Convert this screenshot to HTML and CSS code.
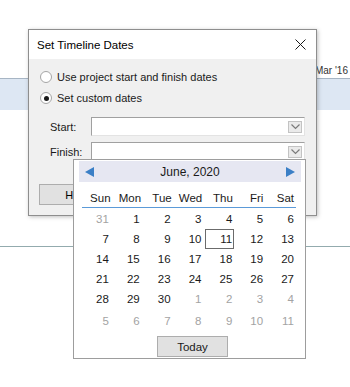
FILE: index.html
```html
<!DOCTYPE html>
<html>
<head>
<meta charset="utf-8">
<link rel="stylesheet" href="styles.css">
</head>
<body>
<div class="timeline">
  <div class="scale-label">Mar '16</div>
  <div class="band"></div>
  <div class="spacer"></div>
  <div class="baseline"></div>
</div>

<div class="dialog">
  <div class="titlebar">
    <span class="title">Set Timeline Dates</span>
    <svg class="close" width="11" height="11" viewBox="0 0 11 11"><path d="M0.5 0.5 L10.5 10.5 M10.5 0.5 L0.5 10.5" stroke="#1a1a1a" stroke-width="1" fill="none"/></svg>
  </div>
  <div class="dlg-body">
    <label class="radio-row"><span class="radio"></span><span>Use project start and finish dates</span></label>
    <label class="radio-row"><span class="radio checked"></span><span>Set custom dates</span></label>
    <div class="field first">
      <span class="field-label">Start:</span>
      <div class="combo"><span class="drop"><svg width="9" height="6" viewBox="0 0 9 6"><path d="M0.5 0.5 L4.5 4.5 L8.5 0.5" stroke="#7a7a7a" stroke-width="1.2" fill="none"/></svg></span></div>
    </div>
    <div class="field">
      <span class="field-label">Finish:</span>
      <div class="combo"><span class="drop"><svg width="9" height="6" viewBox="0 0 9 6"><path d="M0.5 0.5 L4.5 4.5 L8.5 0.5" stroke="#7a7a7a" stroke-width="1.2" fill="none"/></svg></span></div>
    </div>
    <div class="buttons">
      <button class="btn">Help</button>
    </div>
  </div>
</div>

<div class="calendar">
  <div class="cal-head">
    <span class="arrow left"></span>
    <span class="month">June, 2020</span>
    <span class="arrow right"></span>
  </div>
  <div class="weekdays">
    <span>Sun</span><span>Mon</span><span>Tue</span><span>Wed</span><span>Thu</span><span>Fri</span><span>Sat</span>
  </div>
  <div class="days">
    <span class="other">31</span><span>1</span><span>2</span><span>3</span><span>4</span><span>5</span><span>6</span>
    <span>7</span><span>8</span><span>9</span><span>10</span><span class="today">11</span><span>12</span><span>13</span>
    <span>14</span><span>15</span><span>16</span><span>17</span><span>18</span><span>19</span><span>20</span>
    <span>21</span><span>22</span><span>23</span><span>24</span><span>25</span><span>26</span><span>27</span>
    <span>28</span><span>29</span><span>30</span><span class="other">1</span><span class="other">2</span><span class="other">3</span><span class="other">4</span>
    <span class="other">5</span><span class="other">6</span><span class="other">7</span><span class="other">8</span><span class="other">9</span><span class="other">10</span><span class="other">11</span>
  </div>
  <div class="cal-foot">
    <button class="today-btn">Today</button>
  </div>
</div>
</body>
</html>
```

FILE: styles.css
```css
* { box-sizing: border-box; }
html, body {
  margin: 0;
  padding: 0;
}
body {
  width: 350px;
  height: 387px;
  overflow: hidden;
  background: #ffffff;
  font-family: "Liberation Sans", Arial, sans-serif;
  font-size: 11px;
  color: #1a1a1a;
  position: relative;
}

/* background timeline */
.timeline {
  padding-top: 64px;
}
.scale-label {
  height: 14px;
  line-height: 14px;
  font-size: 10px;
  text-align: right;
  padding-right: 2px;
  color: #333;
}
.band {
  height: 32px;
  border-top: 1px solid #a7b5c4;
  background: #dde7f3;
}
.spacer {
  height: 136px;
}
.baseline {
  border-top: 1px solid #93abae;
}

/* dialog */
.dialog {
  position: absolute;
  left: 28px;
  top: 29px;
  width: 289px;
  height: 187px;
  border: 1px solid #8e8e8e;
  background: #f0f0f0;
  box-shadow: 1px 1px 4px rgba(0,0,0,0.25);
}
.titlebar {
  height: 29px;
  background: #ffffff;
  display: flex;
  align-items: center;
  justify-content: space-between;
  padding: 0 10px 0 8px;
}
.title {
  color: #000;
  font-size: 11.5px;
}
.close {
  display: block;
}
.dlg-body {
  padding: 9px 11px 0 11px;
  display: flex;
  flex-direction: column;
}
.radio-row {
  display: flex;
  align-items: center;
  height: 18px;
  gap: 5px;
  margin-bottom: 3px;
}
.radio {
  width: 12px;
  height: 12px;
  border-radius: 50%;
  border: 1px solid #a5a5a5;
  background: #fff;
  display: flex;
  align-items: center;
  justify-content: center;
}
.radio.checked::after {
  content: "";
  width: 5px;
  height: 5px;
  border-radius: 50%;
  background: #1a1a1a;
}
.field {
  display: flex;
  align-items: center;
  height: 19px;
  margin-top: 6px;
}
.field.first {
  margin-top: 7px;
}
.field-label {
  width: 41px;
  margin-left: 10px;
}
.combo {
  width: 214px;
  height: 19px;
  border: 1px solid;
  border-color: #a0a0a0 #e3e3e3 #e3e3e3 #a0a0a0;
  background: #fff;
  display: flex;
  justify-content: flex-end;
  align-items: center;
  padding-right: 2px;
}
.drop {
  width: 14px;
  height: 12px;
  border: 1px solid #c3c3c3;
  background: #eaeaea;
  display: flex;
  align-items: center;
  justify-content: center;
}
.drop svg { display: block; }
.buttons {
  margin-top: 23px;
  margin-left: -1px;
}
.btn {
  width: 75px;
  height: 21px;
  border: 1px solid #adadad;
  background: #e1e1e1;
  font: inherit;
  color: #000;
  padding: 0;
}

/* calendar popup */
.calendar {
  position: absolute;
  left: 73px;
  top: 159px;
  width: 233px;
  height: 200px;
  border: 1px solid #9d9d9d;
  background: #fff;
  padding: 1px 4px 0 5px;
}
.cal-head {
  height: 21px;
  background: #e6e7f2;
  display: flex;
  align-items: center;
  justify-content: space-between;
  padding: 0 6px;
}
.month {
  color: #1a1a1a;
  font-size: 12px;
}
.arrow {
  width: 0;
  height: 0;
  border-top: 5px solid transparent;
  border-bottom: 5px solid transparent;
}
.arrow.left {
  border-right: 9px solid #3b7fc6;
}
.arrow.right {
  border-left: 9px solid #3b7fc6;
}
.weekdays {
  margin: 9px 5px 0 3px;
  height: 17px;
  display: grid;
  grid-template-columns: repeat(7, 1fr);
  border-bottom: 1px solid #5b9ad8;
  line-height: 15px;
  font-size: 11.5px;
}
.weekdays span, .days span {
  text-align: right;
  padding-right: 2px;
}
.days {
  margin: 1px 5px 0 1px;
  display: grid;
  grid-template-columns: repeat(7, 1fr);
  grid-auto-rows: 20px;
  font-size: 11.5px;
}
.days span {
  line-height: 21px;
  color: #1a1a1a;
}
.days span.other {
  color: #a3a3a3;
}
.days span.today {
  border: 1px solid #6b6b6b;
  line-height: 19px;
  padding-right: 1px;
  margin-left: 2px;
}
.days span:nth-child(n+36) {
  line-height: 24px;
}
.cal-foot {
  display: flex;
  justify-content: center;
  margin-top: 7px;
}
.today-btn {
  width: 71px;
  height: 21px;
  border: 1px solid #adadad;
  background: #e1e1e1;
  font: inherit;
  font-size: 11.5px;
  color: #1a1a1a;
  padding: 0;
  margin-left: 5px;
}
```
